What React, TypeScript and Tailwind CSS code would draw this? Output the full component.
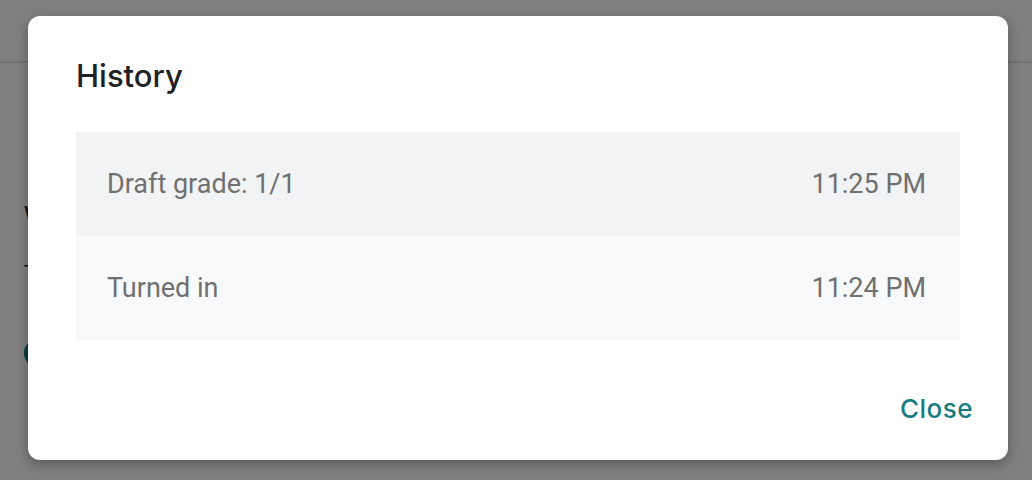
import React from "react";

const historyItems = [
  { id: 1, label: "Draft grade: 1/1", time: "11:25 PM", bg: "bg-[#f1f3f4]" },
  { id: 2, label: "Turned in", time: "11:24 PM", bg: "bg-[#f8f9fa]" },
];

const App = () => {
  return (
    <div className="relative h-[480px] w-[1032px] overflow-hidden bg-white">
      {/* Page behind the dialog */}
      <div className="h-[63px] border-b-2 border-[#e4e4e4]" />
      <div className="pl-6 pt-[136px] font-['Open_Sans',sans-serif] text-[#202124]">
        <h1 className="text-[30px] leading-[34px] font-normal">Work</h1>
        <p className="mt-6 text-[20px]">Turned in</p>
        <div className="mt-[52px] h-[28px] w-[28px] rounded-full bg-[#127a7f]" />
      </div>

      {/* Scrim */}
      <div className="absolute inset-0 bg-black/50" />

      {/* Dialog */}
      <div className="absolute left-[28px] top-[16px] flex h-[444px] w-[980px] flex-col rounded-[12px] bg-white shadow-[0_4px_12px_rgba(0,0,0,0.3)]">
        <h2 className="px-12 pt-[38px] font-['Inter',sans-serif] text-[31px] leading-[44px] font-medium text-[#202124]">
          History
        </h2>
        <div className="mx-12 mt-[34px] flex flex-col font-['Roboto',sans-serif] text-[27px] text-[#707070]">
          {historyItems.map((item) => (
            <div
              key={item.id}
              className={`flex h-[104px] items-center justify-between pl-[31px] pr-[34px] ${item.bg}`}
            >
              <span>{item.label}</span>
              <span>{item.time}</span>
            </div>
          ))}
        </div>
        <div className="flex flex-1 items-center justify-end pr-[35px] pt-[16px]">
          <button className="font-['Inter',sans-serif] text-[26px] font-medium tracking-[0.5px] text-[#177d80]">
            Close
          </button>
        </div>
      </div>
    </div>
  );
};

export default App;
